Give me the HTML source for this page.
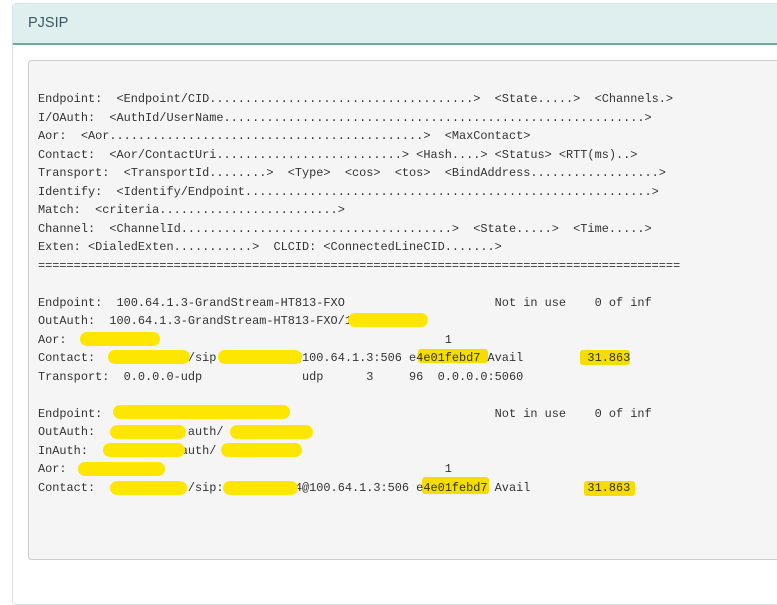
<!DOCTYPE html>
<html><head><meta charset="utf-8"><style>
html,body{margin:0;width:777px;height:515px;overflow:hidden;background:#fff;font-family:"Liberation Sans",sans-serif;}
.panel{position:absolute;left:12px;top:3px;width:800px;height:600px;border:1px solid #d6e4e2;border-radius:4px;background:#fff;}
.hd{height:39px;background:#dfeeee;border-bottom:2px solid #6aae92;border-radius:4px 4px 0 0;}
.hd span{position:absolute;left:15px;top:11px;font-size:14.5px;color:#3b5a63;}
pre{position:absolute;left:28px;top:60px;width:800px;height:500px;margin:0;box-sizing:border-box;background:#f5f5f5;border:1px solid #ccc;border-radius:4px;padding:29px 0 0 9px;font-family:"Liberation Mono",monospace;font-size:11.9px;line-height:18.5px;color:#333;}
.y{position:absolute;background:#ffe600;border-radius:8px;}
.m{mix-blend-mode:multiply;}
</style></head><body>
<div class="panel"><div class="hd"><span>PJSIP</span></div></div>
<pre>Endpoint:  &lt;Endpoint/CID.....................................&gt;  &lt;State.....&gt;  &lt;Channels.&gt;
I/OAuth:  &lt;AuthId/UserName...........................................................&gt;
Aor:  &lt;Aor............................................&gt;  &lt;MaxContact&gt;
Contact:  &lt;Aor/ContactUri..........................&gt; &lt;Hash....&gt; &lt;Status&gt; &lt;RTT(ms)..&gt;
Transport:  &lt;TransportId........&gt;  &lt;Type&gt;  &lt;cos&gt;  &lt;tos&gt;  &lt;BindAddress..................&gt;
Identify:  &lt;Identify/Endpoint.........................................................&gt;
Match:  &lt;criteria.........................&gt;
Channel:  &lt;ChannelId......................................&gt;  &lt;State.....&gt;  &lt;Time.....&gt;
Exten: &lt;DialedExten...........&gt;  CLCID: &lt;ConnectedLineCID.......&gt;
==========================================================================================

Endpoint:  100.64.1.3-GrandStream-HT813-FXO                     Not in use    0 of inf
OutAuth:  100.64.1.3-GrandStream-HT813-FXO/1
Aor:                                                     1
Contact:             /sip:          @100.64.1.3:506 e4e01febd7 Avail         31.863
Transport:  0.0.0.0-udp              udp      3     96  0.0.0.0:5060

Endpoint:                                                       Not in use    0 of inf
OutAuth:            -auth/
InAuth:            -auth/
Aor:                                                     1
Contact:             /sip:          4@100.64.1.3:506 e4e01febd7 Avail        31.863
</pre>
<div class="y" style="left:348px;top:313px;width:80px;height:14px"></div>
<div class="y" style="left:80px;top:332px;width:80px;height:14px"></div>
<div class="y" style="left:108px;top:350px;width:82px;height:14px"></div>
<div class="y" style="left:218px;top:350px;width:84px;height:14px"></div>
<div class="y m" style="left:418px;top:349px;width:70px;height:14px;border-radius:3px"></div>
<div class="y m" style="left:580px;top:350px;width:50px;height:15px;border-radius:3px"></div>
<div class="y" style="left:113px;top:405px;width:177px;height:14px"></div>
<div class="y" style="left:110px;top:425px;width:76px;height:14px"></div>
<div class="y" style="left:230px;top:425px;width:83px;height:14px"></div>
<div class="y" style="left:103px;top:443px;width:82px;height:14px"></div>
<div class="y" style="left:221px;top:443px;width:81px;height:14px"></div>
<div class="y" style="left:78px;top:462px;width:87px;height:14px"></div>
<div class="y" style="left:110px;top:481px;width:77px;height:14px"></div>
<div class="y" style="left:223px;top:481px;width:75px;height:14px"></div>
<div class="y m" style="left:422px;top:477px;width:67px;height:17px;border-radius:3px"></div>
<div class="y m" style="left:584px;top:481px;width:51px;height:15px;border-radius:3px"></div>
</body></html>
